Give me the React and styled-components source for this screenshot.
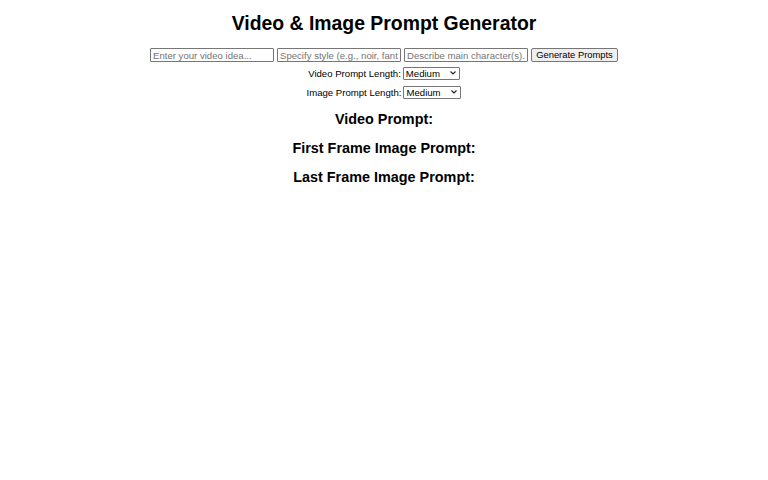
import React from "react";
import styled, { createGlobalStyle } from "styled-components";

const Global = createGlobalStyle`
  html, body { margin: 0; padding: 0; background: #fff; }
  body { font-family: "Liberation Sans", Arial, sans-serif; color: #000; }
`;

const Page = styled.main`
  display: flex;
  flex-direction: column;
  align-items: center;
  text-align: center;
`;

const Title = styled.h1`
  margin: 0 0 13px;
  padding-top: 11px;
  font-size: 19.4px;
  line-height: 24px;
  font-weight: 700;
`;

const InputRow = styled.div`
  display: flex;
  gap: 3px;
  height: 14px;
  margin-bottom: 2px;
`;

const TextField = styled.input`
  box-sizing: border-box;
  width: 124px;
  height: 14px;
  padding: 0 2px;
  border: 1px solid #767676;
  border-radius: 1px;
  font-family: "Liberation Sans", Arial, sans-serif;
  font-size: 9.6px;
  color: #000;
  &::placeholder { color: #757575; }
`;

const Button = styled.button`
  box-sizing: border-box;
  width: 87px;
  height: 14px;
  padding: 0 3px;
  border: 1px solid #767676;
  border-radius: 2px;
  background: #efefef;
  font-family: "Liberation Sans", Arial, sans-serif;
  font-size: 9.4px;
  color: #000;
  line-height: 12px;
  white-space: nowrap;
`;

const LengthRow = styled.div`
  display: flex;
  align-items: center;
  justify-content: center;
  height: 19px;
  font-size: 9.6px;
  gap: 2px;
`;

const SelectWrap = styled.span`
  position: relative;
  display: inline-flex;
`;

const Select = styled.select`
  box-sizing: border-box;
  appearance: none;
  width: ${(p) => p.$w}px;
  height: 13px;
  padding: 0 0 0 2px;
  border: 1px solid #767676;
  border-radius: 1px;
  background: #fff;
  font-family: "Liberation Sans", Arial, sans-serif;
  font-size: 9.6px;
  line-height: 11px;
  color: #000;
`;

const Chevron = styled.svg`
  position: absolute;
  right: 4px;
  top: 4px;
  width: 6px;
  height: 4px;
  pointer-events: none;
`;

const Outputs = styled.section`
  margin-top: 3px;
  display: flex;
  flex-direction: column;
`;

const Heading = styled.h2`
  margin: 0;
  font-size: 14.4px;
  line-height: 29px;
  font-weight: 700;
`;

function LengthPicker({ label, width }) {
  return (
    <LengthRow>
      <span>{label}</span>
      <SelectWrap>
        <Select $w={width} defaultValue="Medium">
          <option>Short</option>
          <option>Medium</option>
          <option>Long</option>
        </Select>
        <Chevron viewBox="0 0 6 4">
          <path d="M0.5 0.5 L3 3 L5.5 0.5" fill="none" stroke="#222" strokeWidth="1.1" />
        </Chevron>
      </SelectWrap>
    </LengthRow>
  );
}

export default function App() {
  return (
    <>
      <Global />
      <Page>
        <Title>Video &amp; Image Prompt Generator</Title>
        <InputRow>
          <TextField placeholder="Enter your video idea..." />
          <TextField placeholder="Specify style (e.g., noir, fantasy)" />
          <TextField placeholder="Describe main character(s)..." />
          <Button>Generate Prompts</Button>
        </InputRow>
        <LengthPicker label="Video Prompt Length:" width={57} />
        <LengthPicker label="Image Prompt Length:" width={58} />
        <Outputs>
          <Heading>Video Prompt:</Heading>
          <Heading>First Frame Image Prompt:</Heading>
          <Heading>Last Frame Image Prompt:</Heading>
        </Outputs>
      </Page>
    </>
  );
}
